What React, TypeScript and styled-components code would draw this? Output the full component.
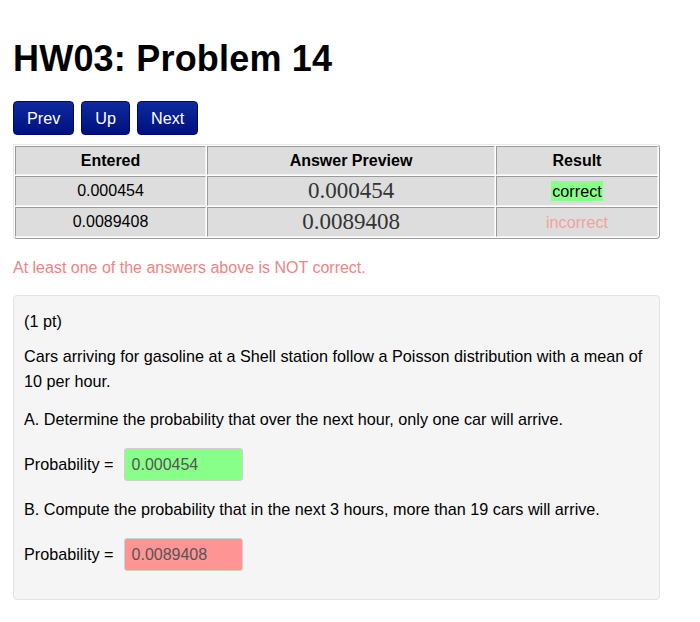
import styled, { createGlobalStyle } from 'styled-components';

const GlobalStyle = createGlobalStyle`
    body {
        margin: 0;
        background: #ffffff;
        font-family: "Liberation Sans", Arial, Helvetica, sans-serif;
        color: #000;
    }
`;

const Page = styled.div`
    padding: 0 40px 0 13px;
    width: 700px;
    box-sizing: border-box;
`;

const Title = styled.h1`
    margin: 0;
    padding-top: 39px;
    font-size: 36px;
    font-weight: 700;
    line-height: 40px;
    letter-spacing: 0.2px;
`;

const Nav = styled.div`
    display: flex;
    gap: 7px;
    margin-top: 22px;
`;

const NavButton = styled.button`
    height: 34px;
    padding: 0 13px;
    border: 1px solid #000a60;
    border-radius: 4px;
    background: linear-gradient(#0d2a9e, #001080);
    color: #fff;
    font-family: inherit;
    font-size: 16.2px;
`;

const ResultsTable = styled.table`
    margin-top: 9px;
    width: 647px;
    border-collapse: separate;
    border-spacing: 1px;
    border: 1px solid #9a9a9a;
    border-top-color: #e8e8e8;
    border-left-color: #e8e8e8;
    border-radius: 0 4px 4px 4px;
`;

const Head = styled.th`
    height: 27px;
    background: #dddddd;
    border: 1px solid;
    border-color: #9a9a9a #f2f2f2 #f2f2f2 #9a9a9a;
    font-size: 16px;
    font-weight: 700;
    text-align: center;
    padding: 0;
`;

const Cell = styled.td<{ $math?: boolean }>`
    height: 28px;
    background: #dddddd;
    border: 1px solid;
    border-color: #9a9a9a #f2f2f2 #f2f2f2 #9a9a9a;
    text-align: center;
    padding: 0;
    font-family: ${(p) => (p.$math ? '"Liberation Serif", "Times New Roman", serif' : 'inherit')};
    font-size: ${(p) => (p.$math ? '23px' : '16px')};
    color: ${(p) => (p.$math ? '#333' : '#000')};
`;

const Verdict = styled.span<{ $ok: boolean }>`
    font-size: 16.2px;
    padding: 1px 1px;
    background: ${(p) => (p.$ok ? '#88ff88' : 'transparent')};
    color: ${(p) => (p.$ok ? '#000' : '#f4a0a0')};
`;

const Warning = styled.p`
    margin: 20px 0 0;
    font-size: 16px;
    color: #f08484;
`;

const ProblemBox = styled.div`
    margin-top: 18px;
    width: 647px;
    box-sizing: border-box;
    padding: 13px 10px 28px;
    background: #f5f5f5;
    border: 1px solid #e3e3e3;
    border-radius: 4px;
    font-size: 16.2px;
    line-height: 25px;
`;

const Para = styled.p<{ $gap?: number }>`
    margin: 0 0 ${(p) => p.$gap ?? 13}px;
`;

const AnswerRow = styled.div`
    display: flex;
    align-items: center;
    margin: 16px 0;
    &:last-child {
        margin-bottom: 0;
    }
`;

const AnswerField = styled.div<{ $ok: boolean }>`
    margin-left: 10px;
    width: 119px;
    height: 33px;
    box-sizing: border-box;
    padding: 0 7px;
    display: flex;
    align-items: center;
    border: 1px solid #d0d0d0;
    border-radius: 3px;
    background: ${(p) => (p.$ok ? '#88ff88' : '#ff9494')};
    color: #555;
    font-size: 16px;
`;

const rows = [
    { entered: '0.000454', ok: true },
    { entered: '0.0089408', ok: false },
];

export default function App() {
    return (
        <Page>
            <GlobalStyle />
            <Title>HW03: Problem 14</Title>
            <Nav>
                <NavButton>Prev</NavButton>
                <NavButton>Up</NavButton>
                <NavButton>Next</NavButton>
            </Nav>

            <ResultsTable>
                <thead>
                    <tr>
                        <Head style={{ width: 189 }}>Entered</Head>
                        <Head style={{ width: 286 }}>Answer Preview</Head>
                        <Head>Result</Head>
                    </tr>
                </thead>
                <tbody>
                    {rows.map((r) => (
                        <tr key={r.entered}>
                            <Cell>{r.entered}</Cell>
                            <Cell $math>{r.entered}</Cell>
                            <Cell>
                                <Verdict $ok={r.ok}>{r.ok ? 'correct' : 'incorrect'}</Verdict>
                            </Cell>
                        </tr>
                    ))}
                </tbody>
            </ResultsTable>

            <Warning>At least one of the answers above is NOT correct.</Warning>

            <ProblemBox>
                <Para $gap={10}>(1 pt)</Para>
                <Para>
                    Cars arriving for gasoline at a Shell station follow a Poisson distribution with a mean of 10 per hour.
                </Para>
                <Para>A. Determine the probability that over the next hour, only one car will arrive.</Para>
                <AnswerRow>
                    Probability =<AnswerField $ok>0.000454</AnswerField>
                </AnswerRow>
                <Para>B. Compute the probability that in the next 3 hours, more than 19 cars will arrive.</Para>
                <AnswerRow>
                    Probability =<AnswerField $ok={false}>0.0089408</AnswerField>
                </AnswerRow>
            </ProblemBox>
        </Page>
    );
}
